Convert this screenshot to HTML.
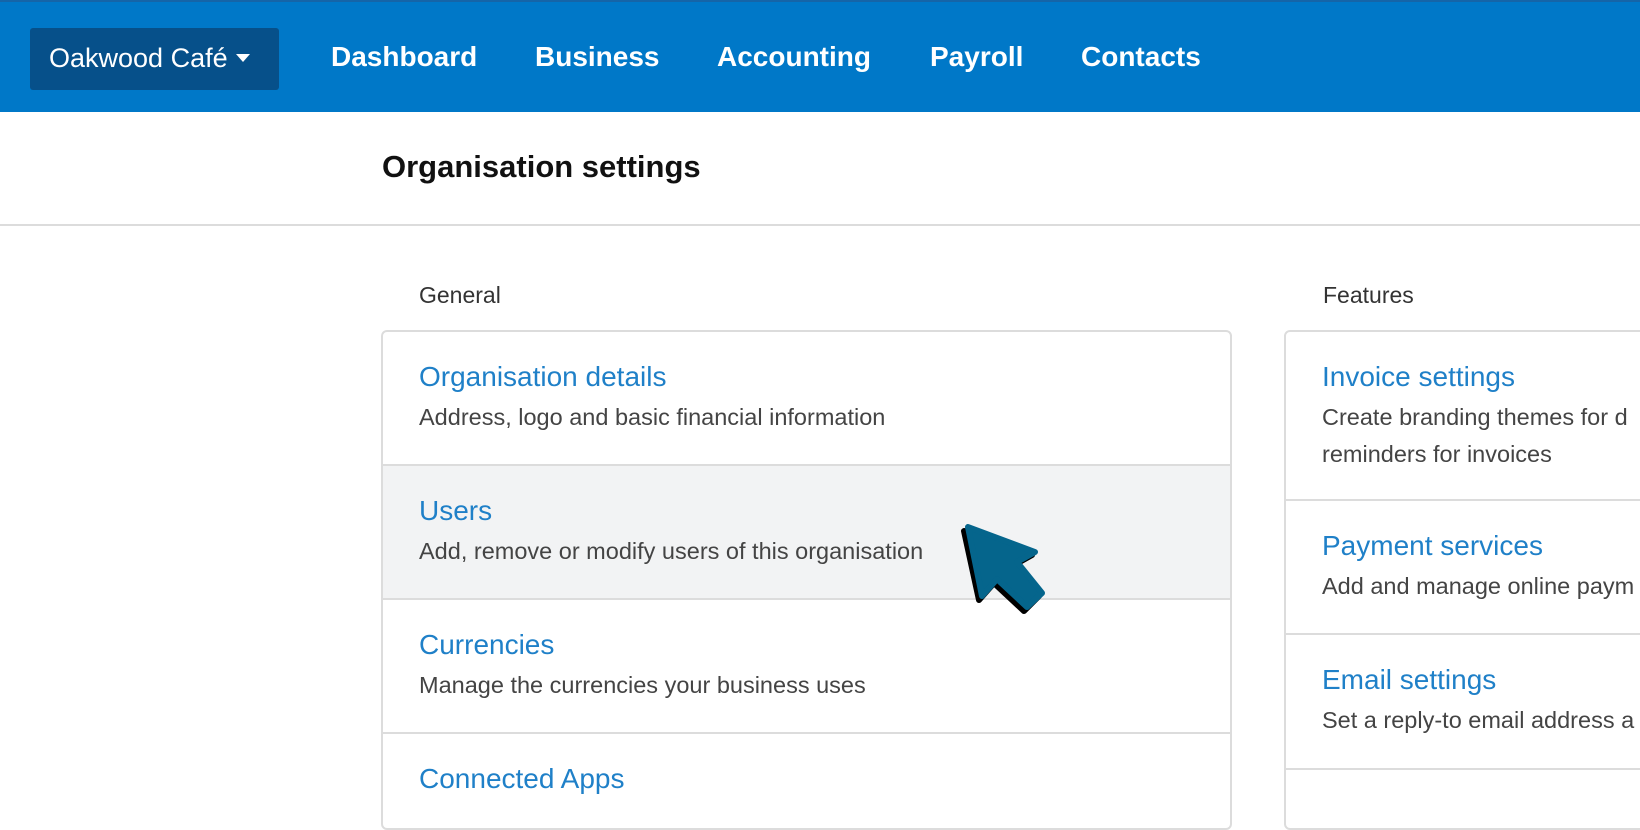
<!DOCTYPE html>
<html><head><meta charset="utf-8"><style>
*{margin:0;padding:0;box-sizing:border-box}
body{width:1640px;height:794px;overflow:hidden;background:#fff;font-family:"Liberation Sans",Arial,sans-serif;position:relative}
.nav{position:absolute;left:0;top:0;width:1640px;height:112px;background:#0078c8;border-top:2px solid #1565a8}
.org{position:absolute;left:30px;top:26px;width:249px;height:62px;background:#06508a;border-radius:3px;color:#fff;font-size:27px;line-height:60px;padding-left:19px;white-space:nowrap}
.org span{display:inline-block;border-left:7px solid transparent;border-right:7px solid transparent;border-top:8px solid #fff;vertical-align:middle;margin-left:8px;margin-top:-3px}
.nl{position:absolute;top:38px;color:#fff;font-weight:bold;font-size:28px;line-height:34px}
.title{position:absolute;left:382px;top:149px;font-size:31px;font-weight:bold;color:#111}
.hr{position:absolute;left:0;top:224px;width:1640px;height:2px;background:#dcdcdc}
.lab{position:absolute;font-size:23px;color:#333;top:282px}
.card{position:absolute;border:2px solid #dcdcdc;border-radius:6px;overflow:hidden}
.row{position:absolute;left:0;right:0;border-bottom:2px solid #dcdcdc}
.row a{position:absolute;left:36px;font-size:28px;color:#1f80c8;text-decoration:none;white-space:nowrap}
.row p{position:absolute;left:36px;font-size:23.5px;color:#444;line-height:37px;white-space:nowrap}
</style></head><body>
<div class="nav">
<div class="org">Oakwood Café<span></span></div>
<div class="nl" style="left:331px">Dashboard</div>
<div class="nl" style="left:535px">Business</div>
<div class="nl" style="left:717px">Accounting</div>
<div class="nl" style="left:930px">Payroll</div>
<div class="nl" style="left:1081px">Contacts</div>
</div>
<div class="title">Organisation settings</div>
<div class="hr"></div>
<div class="lab" style="left:419px">General</div>
<div class="lab" style="left:1323px">Features</div>
<div class="card" style="left:381px;top:330px;width:851px;height:500px">
<div class="row" style="top:0;height:134px"><a style="top:29px">Organisation details</a><p style="top:67px">Address, logo and basic financial information</p></div>
<div class="row" style="top:134px;height:134px;background:#f2f3f4"><a style="top:29px">Users</a><p style="top:67px">Add, remove or modify users of this organisation</p></div>
<div class="row" style="top:268px;height:134px"><a style="top:29px">Currencies</a><p style="top:67px">Manage the currencies your business uses</p></div>
<div class="row" style="top:402px;height:134px;border:0"><a style="top:29px">Connected Apps</a></div>
</div>
<div class="card" style="left:1284px;top:330px;width:400px;height:500px">
<div class="row" style="top:0;height:169px"><a style="top:29px">Invoice settings</a><p style="top:67px">Create branding themes for d<br>reminders for invoices</p></div>
<div class="row" style="top:169px;height:134px"><a style="top:29px">Payment services</a><p style="top:67px">Add and manage online paym</p></div>
<div class="row" style="top:303px;height:135px"><a style="top:29px">Email settings</a><p style="top:67px">Set a reply-to email address a</p></div>
</div>
<svg style="position:absolute;left:0;top:0" width="1640" height="794">
<polygon points="964,531 1032,555 1014,565 1039,596 1024,611 994,583 979,600" fill="#000" stroke="#000" stroke-width="6" stroke-linejoin="round"/>
<polygon points="968,527 1035,552 1017,562 1042,593 1027,607 997,579 982,596" fill="#05658c" stroke="#05658c" stroke-width="6" stroke-linejoin="round"/>
</svg>
</body></html>
